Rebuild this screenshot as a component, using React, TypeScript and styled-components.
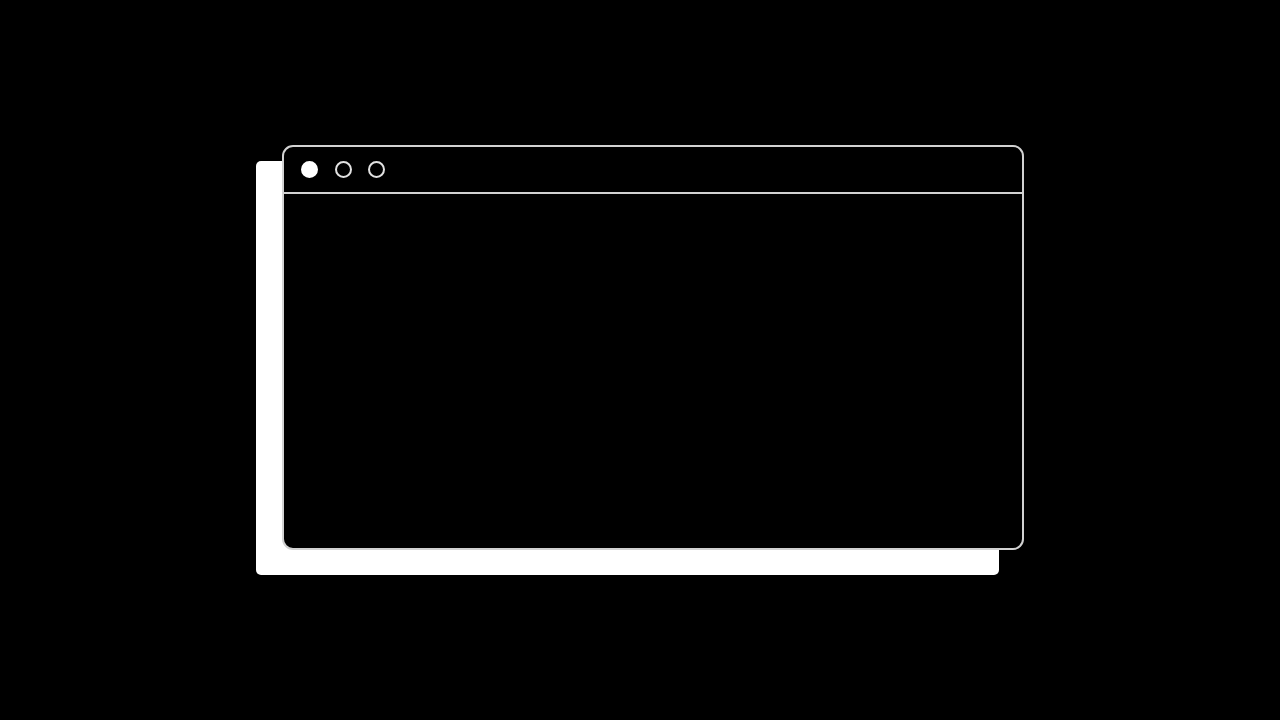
import React from 'react';
import styled, { createGlobalStyle } from 'styled-components';

const GlobalStyle = createGlobalStyle`
  html, body {
    margin: 0;
    padding: 0;
    background: #000;
    font-family: "Liberation Sans", Arial, sans-serif;
  }
`;

const Page = styled.div`
  width: 100vw;
  height: 100vh;
  display: flex;
  align-items: center;
  justify-content: center;
  background: #000;
`;

const Stack = styled.div`
  position: relative;
  width: 768px;
  height: 430px;
  box-sizing: border-box;
  padding-left: 26px;
  padding-bottom: 25px;
`;

const Backdrop = styled.div`
  position: absolute;
  left: 0;
  top: 16px;
  width: 743px;
  height: 414px;
  background: #fff;
  border-radius: 5px;
`;

const Window = styled.div`
  position: relative;
  width: 742px;
  height: 405px;
  box-sizing: border-box;
  border: 2px solid #d2d2d2;
  border-radius: 11px;
  background: #000;
  display: flex;
  flex-direction: column;
`;

const TitleBar = styled.div`
  height: 47px;
  flex-shrink: 0;
  display: flex;
  align-items: center;
  gap: 16.5px;
  padding: 0 0 1px 17px;
  box-sizing: border-box;
  border-bottom: 2px solid #d2d2d2;
`;

const Dot = styled.span<{ $filled?: boolean }>`
  width: 17px;
  height: 17px;
  box-sizing: border-box;
  border-radius: 50%;
  border: 2px solid ${(p) => (p.$filled ? '#fff' : '#e2e2e2')};
  background: ${(p) => (p.$filled ? '#fff' : 'transparent')};
`;

const Body = styled.div`
  flex: 1;
`;

export default function App() {
  return (
    <>
      <GlobalStyle />
      <Page>
        <Stack>
          <Backdrop />
          <Window>
            <TitleBar>
              <Dot $filled />
              <Dot />
              <Dot />
            </TitleBar>
            <Body />
          </Window>
        </Stack>
      </Page>
    </>
  );
}
